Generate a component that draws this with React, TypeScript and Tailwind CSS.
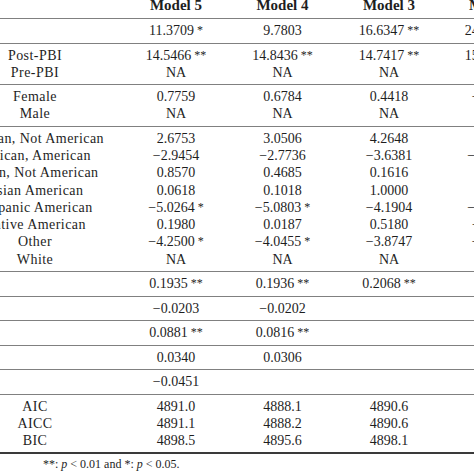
import React from "react";

type Group = { labels: string[]; cols: string[][]; tall?: boolean };

const groups: Group[] = [
  { labels: [""], cols: [["11.3709 *"], ["9.7803"], ["16.6347 **"], ["24.1358 **"]] },
  {
    labels: ["Post-PBI", "Pre-PBI"],
    cols: [
      ["14.5466 **", "NA"],
      ["14.8436 **", "NA"],
      ["14.7417 **", "NA"],
      ["15.0392 **", "NA"],
    ],
  },
  {
    labels: ["Female", "Male"],
    cols: [
      ["0.7759", "NA"],
      ["0.6784", "NA"],
      ["0.4418", "NA"],
      ["−0.0417", "NA"],
    ],
  },
  {
    tall: true,
    labels: [
      "African, Not American",
      "African, American",
      "Asian, Not American",
      "Asian American",
      "Hispanic American",
      "Native American",
      "Other",
      "White",
    ],
    cols: [
      ["2.6753", "−2.9454", "0.8570", "0.0618", "−5.0264 *", "0.1980", "−4.2500 *", "NA"],
      ["3.0506", "−2.7736", "0.4685", "0.1018", "−5.0803 *", "0.0187", "−4.0455 *", "NA"],
      ["4.2648", "−3.6381", "0.1616", "1.0000", "−4.1904", "0.5180", "−3.8747", "NA"],
      ["4.1029", "−3.2215 *", "0.2810", "0.9372", "−4.6630 *", "−0.1153", "−3.9921", "NA"],
    ],
  },
  { labels: [""], cols: [["0.1935 **"], ["0.1936 **"], ["0.2068 **"], [""]] },
  { labels: [""], cols: [["−0.0203"], ["−0.0202"], [""], [""]] },
  { labels: [""], cols: [["0.0881 **"], ["0.0816 **"], [""], [""]] },
  { labels: [""], cols: [["0.0340"], ["0.0306"], [""], [""]] },
  { labels: [""], cols: [["−0.0451"], [""], [""], [""]] },
  {
    labels: ["AIC", "AICC", "BIC"],
    cols: [
      ["4891.0", "4891.1", "4898.5"],
      ["4888.1", "4888.2", "4895.6"],
      ["4890.6", "4890.6", "4898.1"],
      ["", "", ""],
    ],
  },
];

function Value({ text }: { text: string }) {
  const m = text.match(/^(.*?)( \*+)$/);
  if (!m) return <>{text || "\u00a0"}</>;
  return (
    <>
      {m[1]}
      <span className="text-[12px] align-[1px]">{m[2]}</span>
    </>
  );
}

function Cell({ lines, label, tall }: { lines: string[]; label?: boolean; tall?: boolean }) {
  return (
    <div className={"flex flex-col items-center " + (label ? "tracking-[0.45px]" : "")}>
      {lines.map((l, i) => (
        <div
          key={i}
          className={
            tall
              ? "h-[17.25px] leading-[17.25px] whitespace-nowrap"
              : "h-[17px] leading-[17px] whitespace-nowrap"
          }
        >
          <Value text={l} />
        </div>
      ))}
    </div>
  );
}

export default function App() {
  return (
    <div
      className="w-[474px] h-[474px] overflow-hidden bg-white text-[#1e1e1e]"
      style={{ fontFamily: '"Liberation Serif", "DejaVu Serif", serif' }}
    >
      <div className="ml-[-53px] mt-[-7px] w-[601px] text-[14px]">
        <div className="grid grid-cols-[176px_106px_107px_106px_106px] pt-[4px] pb-[4px] font-bold text-[15px]">
          <div />
          <Cell lines={["Model 5"]} />
          <Cell lines={["Model 4"]} />
          <Cell lines={["Model 3"]} />
          <Cell lines={["Model 2"]} />
        </div>
        {groups.map((g, gi) => (
          <div
            key={gi}
            className="grid grid-cols-[176px_106px_107px_106px_106px] border-t-[1.5px] border-[#808080] pt-[3.25px] pb-[3.25px]"
          >
            <Cell lines={g.labels} label tall={g.tall} />
            {g.cols.map((c, ci) => (
              <Cell key={ci} lines={c} tall={g.tall} />
            ))}
          </div>
        ))}
        <div className="border-t-2 border-[#3a3a3a] pl-[96px] pt-[3px] text-[12px] leading-[14px]">
          **: <i>p</i> &lt; 0.01 and *: <i>p</i> &lt; 0.05.
        </div>
      </div>
    </div>
  );
}
